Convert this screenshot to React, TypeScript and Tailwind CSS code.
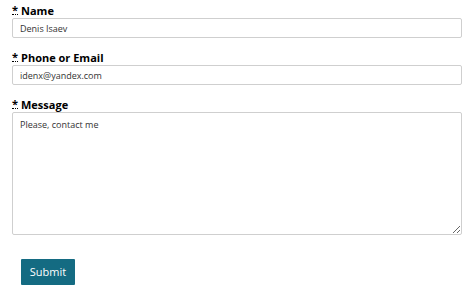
import React from "react";

const font = { fontFamily: '"Open Sans", "Liberation Sans", sans-serif' };

function Label({ text }: { text: string }) {
  return (
    <label className="flex items-center h-[14px] text-[11px] font-bold text-black leading-none">
      <abbr title="required" className="no-underline border-b border-dotted border-black leading-[9px] mr-[3px]">
        *
      </abbr>
      {text}
    </label>
  );
}

export default function App() {
  return (
    <div style={font} className="w-[474px] h-[294px] bg-white px-3 pt-[3px]">
      <form className="flex flex-col">
        <Label text="Name" />
        <input
          defaultValue="Denis Isaev"
          className="mt-[1px] h-[20px] w-[450px] border border-[#cfcfcf] rounded-[2px] px-[7px] text-[9px] text-[#333] outline-none"
        />
        <div className="h-[12px]" />
        <Label text="Phone or Email" />
        <input
          defaultValue="idenx@yandex.com"
          className="mt-[1px] h-[20px] w-[450px] border border-[#cfcfcf] rounded-[2px] px-[7px] text-[9px] text-[#333] outline-none"
        />
        <div className="h-[12px]" />
        <Label text="Message" />
        <textarea
          defaultValue="Please, contact me"
          className="mt-[1px] h-[123px] w-[450px] border border-[#cfcfcf] rounded-[2px] px-[7px] py-[5px] text-[9px] text-[#333] outline-none resize-y"
        />
        <div className="h-[24px]" />
        <button
          type="button"
          className="ml-[9px] w-[54px] h-[26px] bg-[#146b82] text-white text-[11px] rounded-[1px]"
        >
          Submit
        </button>
      </form>
    </div>
  );
}
